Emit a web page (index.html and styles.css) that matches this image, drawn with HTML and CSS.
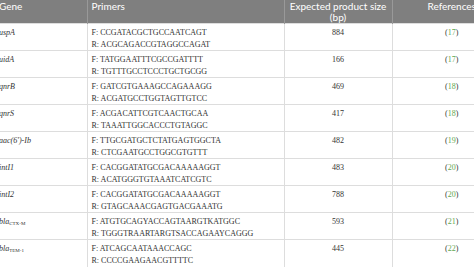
FILE: index.html
```html
<!DOCTYPE html>
<html lang="en">
  <head>
    <meta charset="UTF-8" />
    <title>Primers</title>
    <link rel="stylesheet" href="styles.css">
  </head>
  <body>
    <table class="primers">
      <colgroup>
        <col class="c-gene" />
        <col class="c-primer" />
        <col class="c-size" />
        <col class="c-ref" />
      </colgroup>
      <thead>
        <tr>
          <th class="gene">Gene</th>
          <th>Primers</th>
          <th class="mid">Expected product size<br />(bp)</th>
          <th class="mid">References</th>
        </tr>
      </thead>
      <tbody>
        <tr>
          <td class="gene"><i>uspA</i></td>
          <td>F: CCGATACGCTGCCAATCAGT<br />R: ACGCAGACCGTAGGCCAGAT</td>
          <td class="mid">884</td>
          <td class="mid">(<a href="#">17</a>)</td>
        </tr>
        <tr>
          <td class="gene"><i>uidA</i></td>
          <td>F: TATGGAATTTCGCCGATTTT<br />R: TGTTTGCCTCCCTGCTGCGG</td>
          <td class="mid">166</td>
          <td class="mid">(<a href="#">17</a>)</td>
        </tr>
        <tr>
          <td class="gene"><i>qnrB</i></td>
          <td>F: GATCGTGAAAGCCAGAAAGG<br />R: ACGATGCCTGGTAGTTGTCC</td>
          <td class="mid">469</td>
          <td class="mid">(<a href="#">18</a>)</td>
        </tr>
        <tr>
          <td class="gene"><i>qnrS</i></td>
          <td>F: ACGACATTCGTCAACTGCAA<br />R: TAAATTGGCACCCTGTAGGC</td>
          <td class="mid">417</td>
          <td class="mid">(<a href="#">18</a>)</td>
        </tr>
        <tr>
          <td class="gene"><i>aac(6')-Ib</i></td>
          <td>F: TTGCGATGCTCTATGAGTGGCTA<br />R: CTCGAATGCCTGGCGTGTTT</td>
          <td class="mid">482</td>
          <td class="mid">(<a href="#">19</a>)</td>
        </tr>
        <tr>
          <td class="gene"><i>intI1</i></td>
          <td>F: CACGGATATGCGACAAAAAGGT<br />R: ACATGGGTGTAAATCATCGTC</td>
          <td class="mid">483</td>
          <td class="mid">(<a href="#">20</a>)</td>
        </tr>
        <tr>
          <td class="gene"><i>intI2</i></td>
          <td>F: CACGGATATGCGACAAAAAGGT<br />R: GTAGCAAACGAGTGACGAAATG</td>
          <td class="mid">788</td>
          <td class="mid">(<a href="#">20</a>)</td>
        </tr>
        <tr>
          <td class="gene"><i>bla</i><sub>CTX-M</sub></td>
          <td>F: ATGTGCAGYACCAGTAARGTKATGGC<br />R: TGGGTRAARTARGTSACCAGAAYCAGGG</td>
          <td class="mid">593</td>
          <td class="mid">(<a href="#">21</a>)</td>
        </tr>
        <tr>
          <td class="gene"><i>bla</i><sub>TEM-1</sub></td>
          <td>F: ATCAGCAATAAACCAGC<br />R: CCCCGAAGAACGTTTTC</td>
          <td class="mid">445</td>
          <td class="mid">(<a href="#">22</a>)</td>
        </tr>
      </tbody>
    </table>
  </body>
</html>
```

FILE: styles.css
```css
body {
  margin: 0;
  background-color: #fff;
  overflow: hidden;
}

.primers {
  border-collapse: collapse;
  table-layout: fixed;
  width: 512px;
  margin-left: -1px;
  font-family: "Liberation Serif", serif;
  font-size: 8px;
  color: #333;
}

.c-gene { width: 88px; }
.c-primer { width: 197px; }
.c-size { width: 108px; }
.c-ref { width: 119px; }

.primers th {
  background-color: #7f7f7f;
  color: #fff;
  font-family: Lato, sans-serif;
  font-weight: normal;
  font-size: 10px;
  line-height: 11px;
  text-align: left;
  vertical-align: top;
  height: 23px;
  padding: 1px 0 0 4px;
  box-sizing: border-box;
  border-left: 1px solid #999;
}

.primers td {
  vertical-align: top;
  height: 27px;
  padding: 3px 0 0 4px;
  line-height: 11.5px;
  border-top: 1px solid #ddd;
  border-left: 1px solid #ddd;
  box-sizing: border-box;
  white-space: nowrap;
}

.primers tbody tr:nth-child(even) td {
  height: 26px;
}

.primers .gene {
  padding-left: 0;
  border-left: none;
}

.primers .mid {
  text-align: center;
  padding-left: 0;
}

.primers sub {
  font-size: 5px;
  line-height: 0;
  vertical-align: -1px;
}

.primers a {
  color: #5fa84f;
  text-decoration: none;
}
```
